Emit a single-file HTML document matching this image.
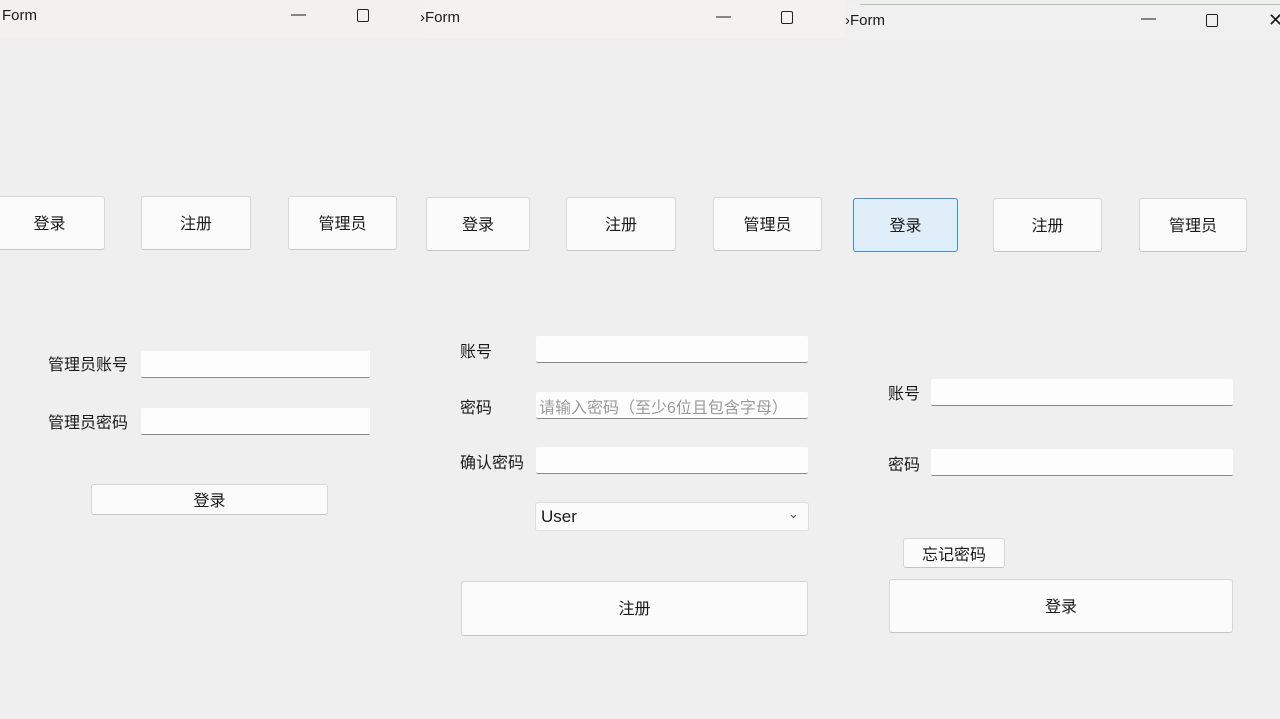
<!DOCTYPE html>
<html><head><meta charset="utf-8"><style>
body{margin:0;width:1280px;height:719px;background:#efefef;position:relative;overflow:hidden;font-family:"Liberation Sans","Noto Sans CJK SC",sans-serif;color:#1a1a1a}
div,span{position:absolute;box-sizing:border-box}
.tb{top:0;height:38px;background:#f3f1ee}
.t{font-size:15px}
.btn{background:#fbfbfb;border:1px solid #d6d6d6;border-bottom-color:#c4c4c4;border-radius:3px;font-size:16px;display:flex;align-items:center;justify-content:center;padding-bottom:3px}
.in{background:#fdfdfd;border-bottom:1px solid #8a8a8a;border-radius:2px}
.lb{font-size:16px}
</style></head><body>
<div class="tb" style="left:0;width:425px"></div>
<div class="tb" style="left:425px;width:420px;background:#f4f2ef"></div>
<div class="tb" style="left:845px;width:435px;top:4px;height:36px;background:#f0f0f0"></div>
<div style="left:860px;top:0;width:420px;height:5px;border-bottom:1px solid #6a9a5a;opacity:.5"></div>
<span class="t" style="left:2px;top:7px">Form</span>
<span class="t" style="left:291px;top:6px">—</span>
<div style="left:357px;top:9px;width:12px;height:13px;border:1.5px solid #222;border-radius:2px"></div>
<span class="t" style="left:420px;top:9px">›Form</span>
<span class="t" style="left:716px;top:8px">—</span>
<div style="left:781px;top:11px;width:12px;height:13px;border:1.5px solid #222;border-radius:2px"></div>
<span class="t" style="left:845px;top:12px">›Form</span>
<span class="t" style="left:1141px;top:10px">—</span>
<div style="left:1206px;top:14px;width:12px;height:13px;border:1.5px solid #222;border-radius:2px"></div>
<span class="t" style="left:1268px;top:10px;font-size:18px">✕</span>

<div class="btn" style="left:-6px;top:196px;width:111px;height:54px">登录</div>
<div class="btn" style="left:141px;top:196px;width:110px;height:54px">注册</div>
<div class="btn" style="left:288px;top:196px;width:109px;height:54px">管理员</div>
<div class="btn" style="left:426px;top:197px;width:104px;height:54px">登录</div>
<div class="btn" style="left:566px;top:197px;width:110px;height:54px">注册</div>
<div class="btn" style="left:713px;top:197px;width:109px;height:54px">管理员</div>
<div class="btn" style="left:853px;top:198px;width:105px;height:54px;background:#e0eef9;border-color:#3d8fd6">登录</div>
<div class="btn" style="left:993px;top:198px;width:109px;height:54px">注册</div>
<div class="btn" style="left:1139px;top:198px;width:108px;height:54px">管理员</div>

<span class="lb" style="left:48px;top:351px">管理员账号</span>
<div class="in" style="left:141px;top:351px;width:229px;height:27px"></div>
<span class="lb" style="left:48px;top:409px">管理员密码</span>
<div class="in" style="left:141px;top:408px;width:229px;height:27px"></div>
<div class="btn" style="left:91px;top:484px;width:237px;height:31px;padding-bottom:1px">登录</div>

<span class="lb" style="left:460px;top:338px">账号</span>
<div class="in" style="left:536px;top:336px;width:272px;height:27px"></div>
<span class="lb" style="left:460px;top:394px">密码</span>
<div class="in" style="left:536px;top:392px;width:272px;height:27px"><span style="left:3px;top:2px;font-size:16px;color:#9a9a9a;white-space:nowrap">请输入密码（至少6位且包含字母）</span></div>
<span class="lb" style="left:460px;top:449px">确认密码</span>
<div class="in" style="left:536px;top:447px;width:272px;height:27px"></div>
<div style="left:535px;top:502px;width:274px;height:29px;background:#fbfbfb;border:1px solid #ddd;border-radius:3px"><span style="left:5px;top:4px;font-size:17px">User</span><span style="left:252px;top:3px;font-size:13px;color:#555">⌄</span></div>
<div class="btn" style="left:461px;top:581px;width:347px;height:55px">注册</div>

<span class="lb" style="left:888px;top:380px">账号</span>
<div class="in" style="left:931px;top:379px;width:302px;height:27px"></div>
<span class="lb" style="left:888px;top:451px">密码</span>
<div class="in" style="left:931px;top:449px;width:302px;height:27px"></div>
<div class="btn" style="left:903px;top:538px;width:102px;height:30px;padding-bottom:1px">忘记密码</div>
<div class="btn" style="left:889px;top:579px;width:344px;height:54px">登录</div>
</body></html>
